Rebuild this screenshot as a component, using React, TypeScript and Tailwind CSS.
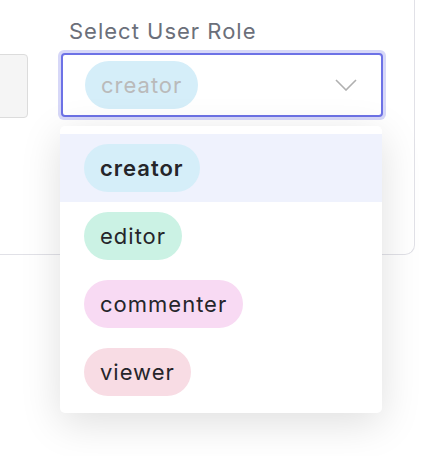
import React from "react";

const roles = [
  { name: "creator", bg: "bg-[#d5eef9]", active: true },
  { name: "editor", bg: "bg-[#cbf2e4]", active: false },
  { name: "commenter", bg: "bg-[#f8daf3]", active: false },
  { name: "viewer", bg: "bg-[#f8dce4]", active: false },
];

const Chevron = () => (
  <svg width="22" height="12" viewBox="0 0 22 12" fill="none">
    <path d="M1 1 L11 11 L21 1" stroke="#b0b0b0" strokeWidth="1.6" />
  </svg>
);

export default function App() {
  return (
    <div
      className="relative w-[432px] h-[456px] overflow-hidden bg-white"
      style={{ fontFamily: "Inter, 'Noto Sans', sans-serif" }}
    >
      {/* card behind */}
      <div className="flex items-start w-[415px] h-[255px] bg-white border-r-[1.5px] border-b-[1.5px] border-[#e1e1e7] rounded-br-[10px]">
        <div className="ml-[-12px] mt-[54px] w-[40px] h-[64px] rounded-[4px] border-[1.5px] border-[#dcdcdc] bg-[#f5f5f5]" />

        <div className="ml-[30px] mt-[16px] flex flex-col">
          <label className="pl-[11px] text-[22px] leading-[30px] text-[#6b6f7a] tracking-[1px]">
            Select User Role
          </label>
          <div className="mt-[4px] rounded-[6px] p-[3px] bg-[#d7d8f8]">
            <div className="flex items-center justify-between w-[322px] h-[64px] rounded-[4px] border-2 border-[#6d72e6] bg-white pl-[22px] pr-[24px]">
              <span className="h-[48px] flex items-center px-4 rounded-full bg-[#d5eef9] text-[22px] text-[#bababa] tracking-[1px]">
                creator
              </span>
              <Chevron />
            </div>
          </div>
        </div>
      </div>

      {/* dropdown menu */}
      <ul className="absolute left-[60px] top-[126px] w-[322px] py-[8px] pb-[7px] bg-white rounded-[5px] shadow-[0_10px_40px_rgba(0,0,0,0.13)]">
        {roles.map((r) => (
          <li
            key={r.name}
            className={`h-[68px] flex items-center pl-[24px] ${r.active ? "bg-[#eff2fd]" : ""}`}
          >
            <span
              className={`h-[48px] flex items-center px-4 rounded-full text-[22px] text-[#25252a] tracking-[1px] ${r.bg} ${
                r.active ? "font-semibold" : ""
              }`}
            >
              {r.name}
            </span>
          </li>
        ))}
      </ul>
    </div>
  );
}
